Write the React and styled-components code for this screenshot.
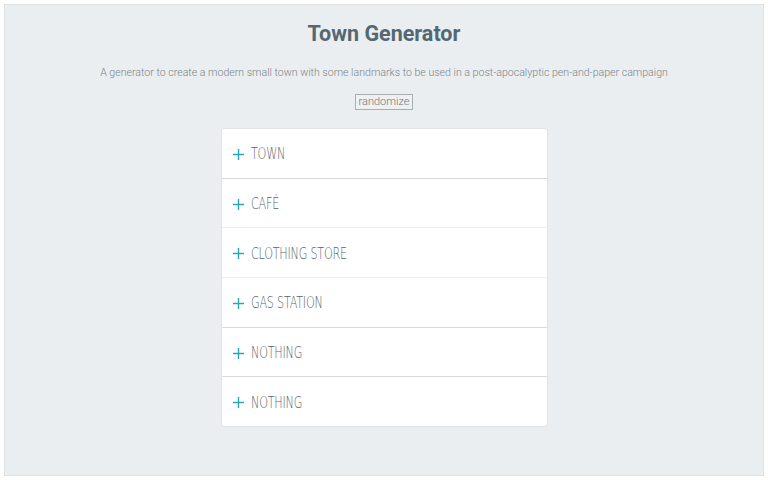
import React from 'react';
import styled, { createGlobalStyle } from 'styled-components';

const GlobalStyle = createGlobalStyle`
  html, body {
    margin: 0;
    padding: 0;
    background: #fff;
  }
  body {
    font-family: Roboto, "Liberation Sans", sans-serif;
  }
`;

const Page = styled.div`
  box-sizing: border-box;
  margin: 4px;
  height: 472px;
  background: #ebeef1;
  border: 1px solid #dde1e4;
  display: flex;
  flex-direction: column;
  align-items: center;
  padding-top: 16px;
`;

const Title = styled.h1`
  margin: 0;
  font-family: Roboto, sans-serif;
  font-weight: 700;
  font-size: 21.5px;
  line-height: 26px;
  color: #546871;
`;

const Subtitle = styled.p`
  margin: 19px 0 0;
  font-family: Roboto, sans-serif;
  font-weight: 300;
  font-size: 10.6px;
  line-height: 14px;
  color: #7a8489;
`;

const Button = styled.button`
  margin-top: 14px;
  padding: 0 3px;
  height: 16px;
  font-family: Roboto, sans-serif;
  font-weight: 300;
  font-size: 11px;
  line-height: 14px;
  color: #6f777b;
  background: #eef0f2;
  border: 1px solid #a9aeb1;
  border-radius: 0;
`;

const Accordion = styled.div`
  margin-top: 18px;
  width: 325px;
  background: #fff;
  border: 1px solid #e0e4e7;
  border-radius: 3px;
  display: flex;
  flex-direction: column;
`;

const Row = styled.div`
  box-sizing: border-box;
  height: 49.7px;
  display: flex;
  align-items: center;
  padding: 2px 0 0 11px;
  border-top: 1px solid ${(p) => (p.$strong ? '#d6dadd' : '#eceff1')};
  &:first-child {
    border-top: none;
    height: 48.7px;
  }
`;

const Plus = styled.svg`
  width: 11px;
  height: 11px;
  margin-right: 7px;
  flex: none;
`;

const Label = styled.span`
  font-family: "DejaVu Sans", sans-serif;
  font-stretch: condensed;
  font-weight: 300;
  font-size: 15.5px;
  color: #56636b;
  letter-spacing: -0.3px;
  transform: scaleX(0.72);
  transform-origin: left center;
`;

const items = [
  { name: 'TOWN' },
  { name: 'CAFÉ', strong: true },
  { name: 'CLOTHING STORE' },
  { name: 'GAS STATION' },
  { name: 'NOTHING', strong: true },
  { name: 'NOTHING', strong: true },
];

export default function App() {
  return (
    <>
      <GlobalStyle />
      <Page>
        <Title>Town Generator</Title>
        <Subtitle>
          A generator to create a modern small town with some landmarks to be used in a post-apocalyptic pen-and-paper campaign
        </Subtitle>
        <Button>randomize</Button>
        <Accordion>
          {items.map((it, i) => (
            <Row key={i} $strong={it.strong}>
              <Plus viewBox="0 0 11 11">
                <path d="M0 5.5H11M5.5 0V11" stroke="#2aa7b6" strokeWidth="1.4" />
              </Plus>
              <Label>{it.name}</Label>
            </Row>
          ))}
        </Accordion>
      </Page>
    </>
  );
}
